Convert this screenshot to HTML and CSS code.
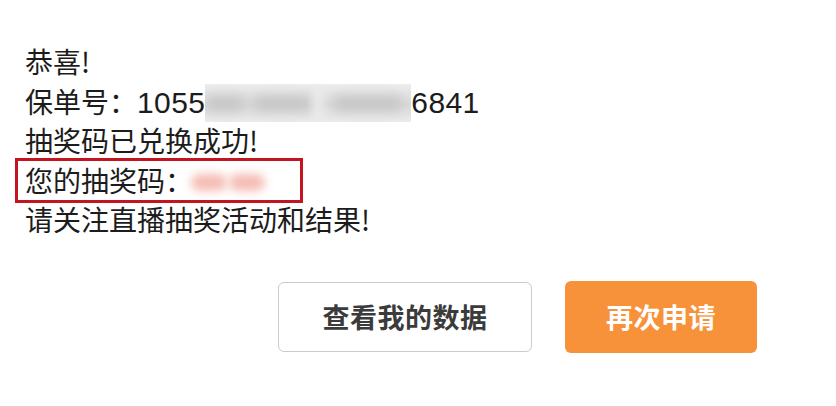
FILE: index.html
```html
<!DOCTYPE html>
<html lang="zh-CN">
<head>
<meta charset="utf-8">
<title>兑换成功</title>
<link rel="stylesheet" href="styles.css">
</head>
<body>
<main class="page">
  <section class="message">
    <div class="line">恭喜!</div>
    <div class="line">保单号：<span class="num">1055</span><span class="mask-gray"><span class="blob b1"></span><span class="blob b2"></span><span class="blob b3"></span><span class="gap-light"></span></span><span class="num">6841</span></div>
    <div class="line">抽奖码已兑换成功!</div>
    <div class="line highlighted">您的抽奖码：<span class="mask-pink"><span class="pink-blob p1"></span><span class="pink-blob p2"></span></span></div>
    <div class="line">请关注直播抽奖活动和结果!</div>
  </section>
  <div class="actions">
    <button class="btn btn-outline">查看我的数据</button>
    <button class="btn btn-primary">再次申请</button>
  </div>
</main>
</body>
</html>
```

FILE: styles.css
```css
html, body {
  margin: 0;
  padding: 0;
  background: #ffffff;
}
body {
  width: 836px;
  height: 406px;
  overflow: hidden;
  font-family: "Noto Sans CJK SC", "Noto Sans", sans-serif;
  color: #1c1c1c;
}
.page {
  padding-top: 42px;
}
.message {
  padding-left: 25px;
  font-size: 28px;
}
.line {
  height: 39.5px;
  line-height: 39.5px;
  white-space: nowrap;
  position: relative;
}
.num {
  font-family: "Liberation Sans", "Noto Sans", sans-serif;
  font-size: 30px;
  letter-spacing: 0.4px;
}
.mask-gray {
  display: inline-block;
  position: relative;
  vertical-align: middle;
  width: 206px;
  height: 38px;
  margin-top: -3px;
  background: linear-gradient(to bottom, #eeeeee 0%, #e0e0e0 35%, #dadada 55%, #ececec 100%);
  overflow: hidden;
}
.blob {
  position: absolute;
  top: 12px;
  height: 15px;
  background: #c6c6c6;
  border-radius: 7px;
  filter: blur(6px);
}
.b1 { left: 0; width: 40px; }
.b2 { left: 48px; width: 60px; }
.b3 { left: 128px; width: 70px; }
.gap-light {
  position: absolute;
  left: 108px;
  top: 0;
  width: 10px;
  height: 38px;
  background: #eaeaea;
  filter: blur(4px);
}
.highlighted::after {
  content: "";
  position: absolute;
  left: -10px;
  top: -2.5px;
  width: 282px;
  height: 39px;
  border: 3px solid #c3141f;
}
.mask-pink {
  display: inline-block;
  position: relative;
  vertical-align: middle;
  width: 82px;
  height: 24px;
  margin-left: -6px;
  margin-top: -2px;
}
.pink-blob {
  position: absolute;
  top: 3px;
  height: 17px;
  background: #f5bcb3;
  border-radius: 9px;
  filter: blur(5px);
}
.p1 { left: 4px; width: 36px; }
.p2 { left: 42px; width: 36px; }
.actions {
  display: flex;
  justify-content: flex-end;
  align-items: center;
  gap: 33px;
  padding-right: 79px;
  margin-top: 41px;
}
.btn {
  font-family: "Noto Sans CJK SC", "Noto Sans", sans-serif;
  font-size: 27px;
  font-weight: 700;
  border-radius: 6px;
  cursor: pointer;
  letter-spacing: 0.5px;
}
.btn-outline {
  width: 254px;
  height: 70px;
  background: #ffffff;
  border: 1.5px solid #cbcbcb;
  color: #3b3b3b;
}
.btn-primary {
  width: 192px;
  height: 72px;
  background: #f8923a;
  border: none;
  color: #ffffff;
}
```
